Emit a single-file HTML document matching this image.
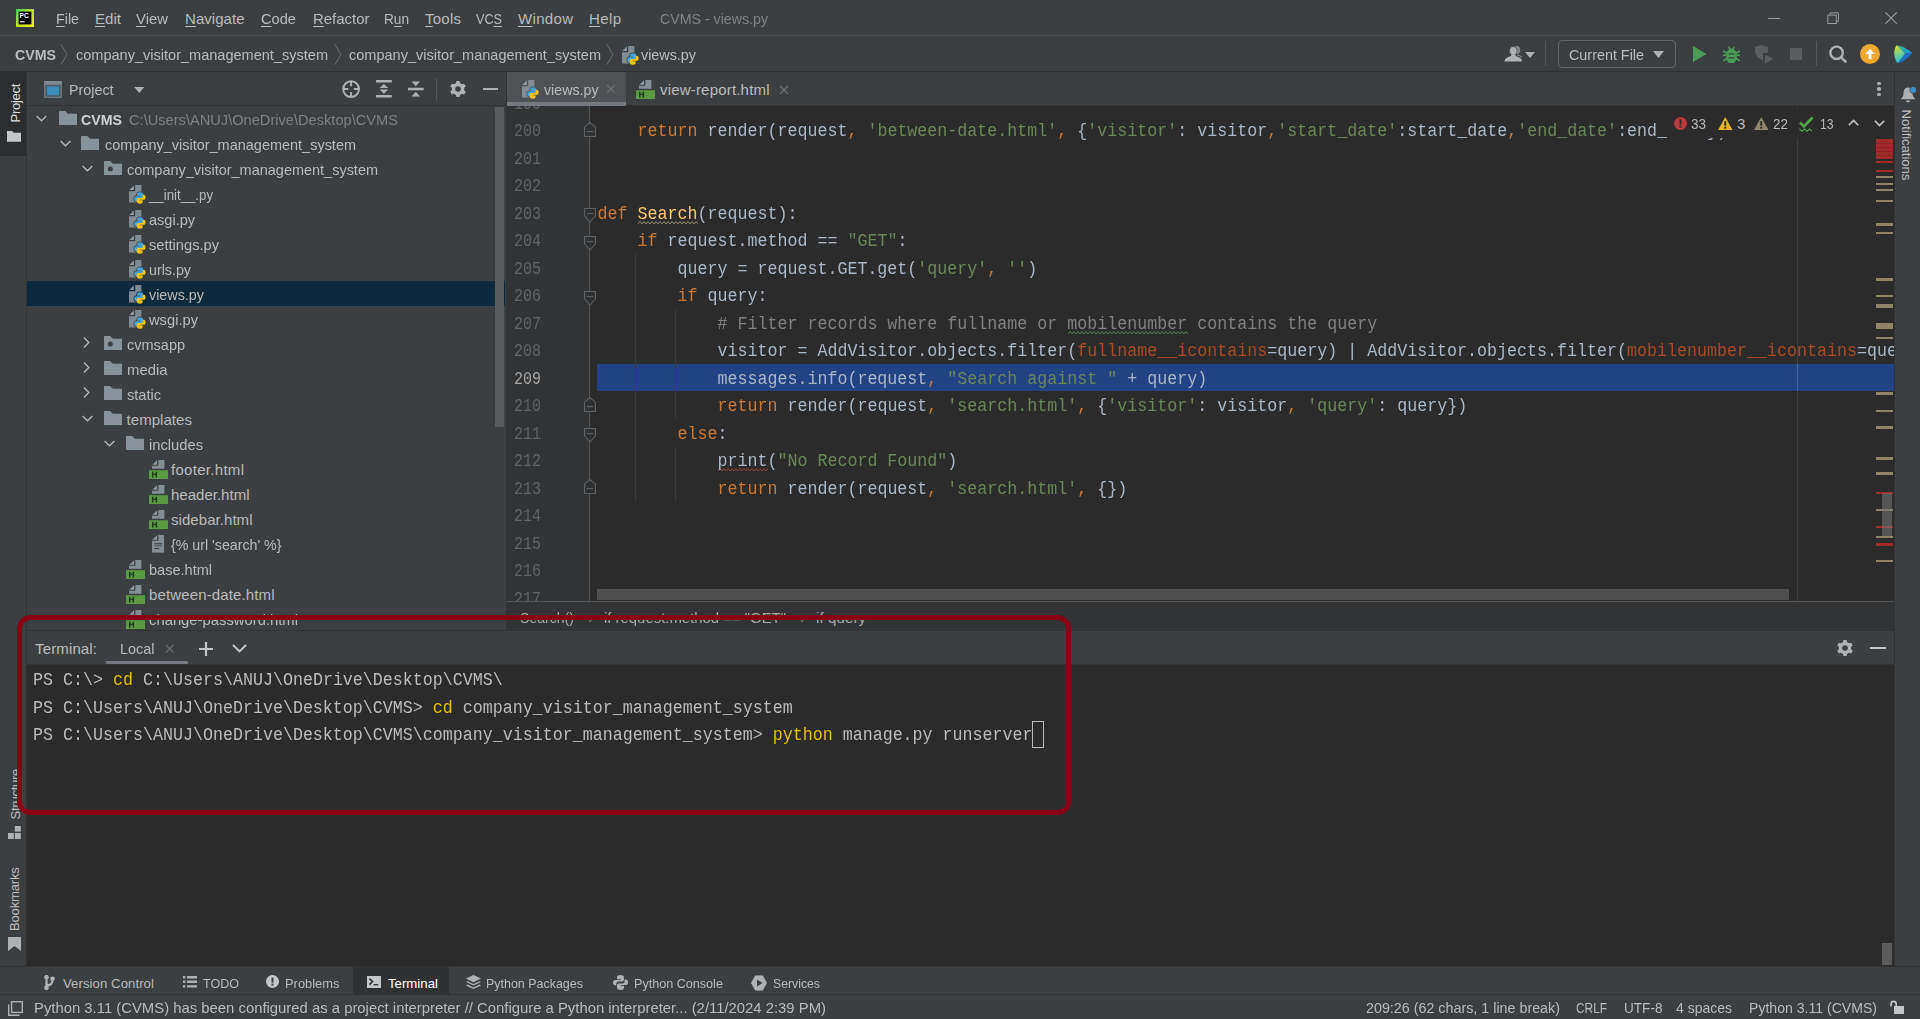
<!DOCTYPE html>
<html><head><meta charset="utf-8"><title>CVMS - views.py</title>
<style>
html,body{margin:0;padding:0;background:#3c3f41;overflow:hidden;}
body{width:1920px;height:1019px;position:relative;font-family:"Liberation Sans",sans-serif;font-size:15px;color:#bbbbbb;}
.b{position:absolute;display:block;}
.t{position:absolute;white-space:pre;display:block;}
.m{font-family:"Liberation Mono",monospace;font-size:16.667px;line-height:27.5px;white-space:pre;position:absolute;display:block;color:#a9b7c6;transform:scaleY(1.07);transform-origin:0 18.2px;}
.k{color:#cc7832}.s{color:#6a8759}.c{color:#808080}.f{color:#ffc66d}.a{color:#aa4926}.y{color:#e5bf00}
.ln{font-family:"Liberation Mono",monospace;font-size:15px;line-height:27.5px;position:absolute;left:514px;color:#606366;white-space:pre;transform:scaleY(1.17);transform-origin:0 17.75px;}
u{text-decoration:underline;text-decoration-thickness:1px;text-underline-offset:1.5px;}
</style></head><body>
<svg width="0" height="0" style="position:absolute"><defs>
<symbol id="folder" viewBox="0 0 18 14"><path d="M.6,0 H6.2 L8.9,2.75 H18 V14 H0 V.6 Q0,0 .6,0z" fill="#87939a"/></symbol>
<symbol id="pkg" viewBox="0 0 18 14"><path d="M.6,0 H6.2 L8.9,2.75 H18 V14 H0 V.6 Q0,0 .6,0z" fill="#87939a"/><circle cx="6.3" cy="8.1" r="2.5" fill="#3c3f41"/></symbol>
<path id="pyb" d="M5.9,0 C3.6,0 3.1,1 3.1,2.2 V3.6 H6 V4.2 H2 C.7,4.2 0,5.2 0,6.9 C0,8.6 .7,9.5 2,9.5 H3 V7.9 C3,6.7 3.9,5.9 5,5.9 H7.9 C8.8,5.9 9.5,5.2 9.5,4.3 V2.2 C9.5,1 8.4,0 5.9,0z"/>
<path id="pyy" d="M6.1,12 C8.4,12 8.9,11 8.9,9.8 V8.4 H6 V7.8 H10 C11.3,7.8 12,6.8 12,5.1 C12,3.4 11.3,2.5 10,2.5 H9 V4.1 C9,5.3 8.1,6.1 7,6.1 H4.1 C3.2,6.1 2.5,6.8 2.5,7.7 V9.8 C2.5,11 3.6,12 6.1,12z"/>
<mask id="pym" maskUnits="userSpaceOnUse" x="0" y="0" width="18" height="20"><rect width="18" height="20" fill="#fff"/><g transform="translate(5.2,7.3) scale(.95)" fill="#000" stroke="#000" stroke-width="1.5"><use href="#pyb"/><use href="#pyy"/></g></mask>
<symbol id="py" viewBox="0 0 17 19.2"><g mask="url(#pym)"><path d="M.4,5 L4.8,.5 V5z" fill="#9aa7b0" opacity=".9"/><path d="M6.2,0 H12.4 V17.6 H0 V6.2 H6.2z" fill="#87939a" opacity=".92"/></g>
<g transform="translate(5.2,7.3) scale(.95)"><use href="#pyb" fill="#40a2dc"/><use href="#pyy" fill="#f5c211"/></g></symbol>
<symbol id="htm" viewBox="0 0 19.3 19"><path d="M3.3,4.7 L8.1,.2 V4.7z" fill="#9aa7b0" opacity=".85"/><path d="M9.4,0 H15.4 V8.8 H3 V5.8 H9.4z" fill="#87939a" opacity=".95"/>
<rect x="0" y="10.2" width="19.3" height="8.8" fill="#5a9a40"/><path d="M3,11.7 h1.5 v2.1 h2.1 v-2.1 h1.5 v5.7 h-1.5 v-2.3 h-2.1 v2.3 h-1.5z" fill="#1d3d18"/></symbol>
<symbol id="tx" viewBox="0 0 12.4 17.8"><path d="M.3,4.8 L5.1,.3 V4.8z" fill="#9aa7b0" opacity=".85"/><path d="M6.4,0 H12.4 V17.8 H0 V5.8 H6.4z" fill="#87939a" opacity=".95"/><path d="M2.4,8.2 h7.6 v.95 h-7.6z M2.4,10.4 h7.6 v.95 h-7.6z M2.4,13 h4.8 v.95 h-4.8z" fill="#3c3f41"/></symbol>
<symbol id="chd" viewBox="0 0 11 7"><path d="M.6,.9 L5.5,5.8 L10.4,.9" fill="none" stroke="#b4b6b8" stroke-width="1.4"/></symbol>
<symbol id="chr" viewBox="0 0 7 11"><path d="M.9,.6 L5.8,5.5 L.9,10.4" fill="none" stroke="#b4b6b8" stroke-width="1.4"/></symbol>
<symbol id="gear" viewBox="0 0 16 16.2"><path fill-rule="evenodd" fill="#afb1b3" d="M5.99,2.13 L6.38,0.06 L9.62,0.06 L10.01,2.13 L12.17,3.37 L14.15,2.68 L15.77,5.48 L14.18,6.85 L14.18,9.35 L15.77,10.72 L14.15,13.52 L12.17,12.83 L10.01,14.07 L9.62,16.14 L6.38,16.14 L5.99,14.07 L3.83,12.83 L1.85,13.52 L0.23,10.72 L1.82,9.35 L1.82,6.85 L0.23,5.48 L1.85,2.68 L3.83,3.37z M5.20,8.10 a2.80,2.80 0 1 0 5.60,0 a2.80,2.80 0 1 0 -5.60,0z"/></symbol>
<symbol id="x" viewBox="0 0 10 10"><path d="M1,1 L9,9 M9,1 L1,9" stroke="#6e7073" stroke-width="1.2" fill="none"/></symbol>
</defs></svg>
<div class="b" style="left:0.00px;top:0.00px;width:1920.00px;height:1019.00px;background:#3c3f41;"></div>
<div class="b" style="left:0.00px;top:35.00px;width:1920.00px;height:1.00px;background:#515151;"></div>
<div class="b" style="left:0.00px;top:71.00px;width:1920.00px;height:1.00px;background:#323232;"></div>
<svg class="b" style="left:16.00px;top:9.00px;" width="18.00" height="18.00" viewBox="0 0 18 18"><defs><linearGradient id="lg" x1="0" y1="0" x2="1" y2="1"><stop offset="0" stop-color="#3fd35a"/><stop offset=".45" stop-color="#b6e021"/><stop offset="1" stop-color="#f5ee1c"/></linearGradient></defs><rect width="18" height="18" fill="url(#lg)"/><rect x="2.6" y="2.6" width="12.8" height="12.8" fill="#000"/><text x="3.6" y="9.4" font-family="Liberation Sans" font-weight="bold" font-size="6.6" fill="#fff">PC</text><rect x="4" y="12.2" width="4.6" height="1.1" fill="#fff"/></svg>
<span class="t" style="left:56.00px;top:8.50px;line-height:20px;font-size:15px;color:#bbbbbb;transform:scaleX(0.9515);transform-origin:0 50%;"><u>F</u>ile</span>
<span class="t" style="left:95.00px;top:8.50px;line-height:20px;font-size:15px;color:#bbbbbb;letter-spacing:0.051px;"><u>E</u>dit</span>
<span class="t" style="left:136.00px;top:8.50px;line-height:20px;font-size:15px;color:#bbbbbb;transform:scaleX(0.9925);transform-origin:0 50%;"><u>V</u>iew</span>
<span class="t" style="left:185.00px;top:8.50px;line-height:20px;font-size:15px;color:#bbbbbb;letter-spacing:0.042px;"><u>N</u>avigate</span>
<span class="t" style="left:261.00px;top:8.50px;line-height:20px;font-size:15px;color:#bbbbbb;transform:scaleX(0.9760);transform-origin:0 50%;"><u>C</u>ode</span>
<span class="t" style="left:312.50px;top:8.50px;line-height:20px;font-size:15px;color:#bbbbbb;transform:scaleX(0.9966);transform-origin:0 50%;"><u>R</u>efactor</span>
<span class="t" style="left:384.00px;top:8.50px;line-height:20px;font-size:15px;color:#bbbbbb;transform:scaleX(0.9085);transform-origin:0 50%;">R<u>u</u>n</span>
<span class="t" style="left:425.00px;top:8.50px;line-height:20px;font-size:15px;color:#bbbbbb;letter-spacing:0.246px;"><u>T</u>ools</span>
<span class="t" style="left:476.00px;top:8.50px;line-height:20px;font-size:15px;color:#bbbbbb;transform:scaleX(0.8430);transform-origin:0 50%;">VC<u>S</u></span>
<span class="t" style="left:518.00px;top:8.50px;line-height:20px;font-size:15px;color:#bbbbbb;letter-spacing:0.330px;"><u>W</u>indow</span>
<span class="t" style="left:589.00px;top:8.50px;line-height:20px;font-size:15px;color:#bbbbbb;letter-spacing:0.383px;"><u>H</u>elp</span>
<span class="t" style="left:660.00px;top:8.50px;line-height:20px;font-size:15px;color:#808284;transform:scaleX(0.9458);transform-origin:0 50%;">CVMS - views.py</span>
<div class="b" style="left:1767.80px;top:18.10px;width:12.50px;height:1.10px;background:#9c9e9f;"></div>
<svg class="b" style="left:1826.70px;top:11.70px;" width="12.40" height="12.40" viewBox="0 0 14 14"><path d="M3.5,3.5 V1 H13 V10.5 H10.5" fill="none" stroke="#9c9e9f" stroke-width="1.1"/><rect x="1" y="3.5" width="9.5" height="9.5" fill="none" stroke="#9c9e9f" stroke-width="1.1"/></svg>
<svg class="b" style="left:1884.80px;top:12.00px;" width="12.20" height="12.20" viewBox="0 0 13 13"><path d="M.5,.5 L12.5,12.5 M12.5,.5 L.5,12.5" stroke="#9c9e9f" stroke-width="1.1"/></svg>
<span class="t" style="left:15.00px;top:44.50px;line-height:20px;font-size:15px;color:#bbbbbb;font-weight:bold;transform:scaleX(0.9460);transform-origin:0 50%;">CVMS</span>
<svg class="b" style="left:60.00px;top:44.00px;" width="8.00" height="21.00" viewBox="0 0 8 21"><path d="M1,.5 L7,10.5 L1,20.5" fill="none" stroke="#6c6e70" stroke-width="1"/></svg>
<span class="t" style="left:76.00px;top:44.50px;line-height:20px;font-size:15px;color:#bbbbbb;transform:scaleX(0.9688);transform-origin:0 50%;">company_visitor_management_system</span>
<svg class="b" style="left:334.00px;top:44.00px;" width="8.00" height="21.00" viewBox="0 0 8 21"><path d="M1,.5 L7,10.5 L1,20.5" fill="none" stroke="#6c6e70" stroke-width="1"/></svg>
<span class="t" style="left:349.00px;top:44.50px;line-height:20px;font-size:15px;color:#bbbbbb;transform:scaleX(0.9688);transform-origin:0 50%;">company_visitor_management_system</span>
<svg class="b" style="left:606.00px;top:44.00px;" width="8.00" height="21.00" viewBox="0 0 8 21"><path d="M1,.5 L7,10.5 L1,20.5" fill="none" stroke="#6c6e70" stroke-width="1"/></svg>
<svg class="b" style="left:621.70px;top:45.50px;" width="17.00" height="19.20"><use href="#py"/></svg>
<span class="t" style="left:641.00px;top:44.50px;line-height:20px;font-size:15px;color:#bbbbbb;transform:scaleX(0.9562);transform-origin:0 50%;">views.py</span>
<svg class="b" style="left:1503.50px;top:45.50px;" width="19.00" height="16.00" viewBox="0 0 19 16"><ellipse cx="13" cy="4" rx="3.3" ry="3.9" fill="#85878a"/><path d="M13.5,8.2 C16,8.8 17.6,9.6 18.2,11.6 L16.6,11.2 C15.8,10.4 14.6,10 13.2,9.8z" fill="#85878a"/><ellipse cx="9.3" cy="5" rx="3.7" ry="4.4" fill="#afb1b3" stroke="#3c3f41" stroke-width=".7"/><path d="M.6,15.6 C.9,12.4 2.4,11.4 6.4,10.2 L7.4,8.8 H11.2 L12.2,10.2 C16.2,11.4 17.7,12.4 18,15.6z" fill="#afb1b3"/></svg>
<svg class="b" style="left:1525.00px;top:52.00px;" width="10.00" height="6.00" viewBox="0 0 10 6"><path d="M0,0 H10 L5,6z" fill="#afb1b3"/></svg>
<div class="b" style="left:1545.00px;top:41.00px;width:1.00px;height:25.00px;background:#55585a;"></div>
<div class="b" style="left:1558.00px;top:40.00px;width:118.00px;height:27.50px;background:transparent;box-sizing:border-box;border:1px solid #646769;border-radius:4px;"></div>
<span class="t" style="left:1569.00px;top:44.50px;line-height:20px;font-size:15px;color:#bbbbbb;transform:scaleX(0.9572);transform-origin:0 50%;">Current File</span>
<svg class="b" style="left:1653.00px;top:51.00px;" width="11.00" height="7.00" viewBox="0 0 11 7"><path d="M0,0 H11 L5.5,7z" fill="#afb1b3"/></svg>
<svg class="b" style="left:1693.00px;top:46.00px;" width="13.50" height="16.00" viewBox="0 0 13.5 16"><path d="M0,0 L13.5,8 L0,16z" fill="#499c54"/></svg>
<svg class="b" style="left:1722.50px;top:45.50px;" width="17.00" height="17.40" viewBox="0 0 17 17.4"><g fill="#499c54"><path d="M4.9,1 L6.1,.2 L7.6,2.6 H9.4 L10.9,.2 L12.1,1 L10.6,3.4 C12.6,4.2 13.7,6 13.7,8.4 V11.2 C13.7,14.8 11.6,17.4 8.5,17.4 S3.3,14.8 3.3,11.2 V8.4 C3.3,6 4.4,4.2 6.4,3.4z"/><path d="M0,8.3 H17 V10.1 H0z M.6,4.2 L4.4,6.6 L3.5,8 L-.3,5.6z M16.4,4.2 L12.6,6.6 L13.5,8 L17.3,5.6z M.6,15.6 L4.4,13.2 L3.5,11.8 L-.3,14.2z M16.4,15.6 L12.6,13.2 L13.5,11.8 L17.3,14.2z"/></g><path d="M5.6,7.3 H11.4 V8.5 H5.6z M5.6,11.3 H11.4 V12.5 H5.6z" fill="#3c3f41"/></svg>
<svg class="b" style="left:1754.00px;top:45.00px;" width="20.00" height="19.00" viewBox="0 0 20 19"><path d="M1,2 L7.5,0 L14,2 V8 H9 V15.5 C4,13.5 1,10 1,6z" fill="#5a5d5f"/><path d="M11,9.5 L19.5,14 L11,18.5z" fill="#5a5d5f"/></svg>
<div class="b" style="left:1789.50px;top:47.70px;width:12.60px;height:12.60px;background:#5a5d5f;"></div>
<div class="b" style="left:1816.00px;top:41.00px;width:1.00px;height:25.00px;background:#55585a;"></div>
<svg class="b" style="left:1828.00px;top:43.50px;" width="20.00" height="20.00" viewBox="0 0 20 20"><circle cx="8.6" cy="8.8" r="6.2" fill="none" stroke="#afb1b3" stroke-width="2.4"/><path d="M13.3,13.6 L18.3,18.3" stroke="#afb1b3" stroke-width="2.6"/></svg>
<svg class="b" style="left:1860.00px;top:43.90px;" width="20.00" height="20.00" viewBox="0 0 20 20"><circle cx="10" cy="10" r="10" fill="#f0a732"/><path d="M10,5.1 L5.1,10 H8.55 V15.1 H11.45 V10 H14.9z" fill="#fff"/></svg>
<svg class="b" style="left:1893.70px;top:44.70px;" width="18.50" height="18.60" viewBox="0 0 18.5 18.6"><defs><linearGradient id="gA" x1="0" y1="0" x2="0.25" y2="1"><stop offset="0" stop-color="#efe62f"/><stop offset=".45" stop-color="#86d37a"/><stop offset="1" stop-color="#22bfd8"/></linearGradient><linearGradient id="gB" x1="0" y1="0" x2="1" y2="1"><stop offset="0" stop-color="#3cc47a"/><stop offset=".5" stop-color="#25abc0"/><stop offset="1" stop-color="#1c8fe0"/></linearGradient></defs><path d="M2.6,.2 C8,1 14,4 18.4,8.2 L11.2,8.4z" fill="url(#gB)"/><path d="M11.2,8.4 L18.4,8.2 C14,13 9,17 3.6,18.5z" fill="#1e6fc6"/><path d="M2.6,.2 C-.6,5 -.8,12.5 3.6,18.5 L11.2,8.4z" fill="url(#gA)"/></svg>
<div class="b" style="left:0.00px;top:72.00px;width:27.00px;height:894.00px;background:#3c3f41;"></div>
<div class="b" style="left:26.00px;top:72.00px;width:1.00px;height:894.00px;background:#323232;"></div>
<div class="b" style="left:0.00px;top:72.00px;width:26.00px;height:84.00px;background:#2b2d2e;"></div>
<span class="t" style="left:-4.00px;top:92.50px;width:39.00px;height:20px;line-height:20px;font-size:13.2px;color:#dddddd;letter-spacing:-0.347px;transform:rotate(-90deg);transform-origin:center center;">Project</span>
<svg class="b" style="left:7.00px;top:130.00px;" width="14.00" height="12.00" viewBox="0 0 18 15"><path d="M0,1 h6.6 l2.2,2.4 H18 V15 H0z" fill="#c4c6c8"/></svg>
<span class="t" style="left:-10.30px;top:783.50px;width:51.00px;height:20px;line-height:20px;font-size:13.2px;color:#bbbbbb;letter-spacing:-0.319px;transform:rotate(-90deg);transform-origin:center center;">Structure</span>
<svg class="b" style="left:8.00px;top:826.00px;" width="13.00" height="13.00" viewBox="0 0 13 13"><rect x="6.8" y="0" width="6" height="5.6" fill="#afb1b3"/><rect x="0" y="7" width="5.8" height="6" fill="#afb1b3"/><rect x="6.8" y="7" width="6" height="6" fill="#afb1b3"/></svg>
<span class="t" style="left:-16.80px;top:889.00px;width:64.00px;height:20px;line-height:20px;font-size:13.2px;color:#bbbbbb;letter-spacing:-0.253px;transform:rotate(-90deg);transform-origin:center center;">Bookmarks</span>
<svg class="b" style="left:8.00px;top:937.00px;" width="13.00" height="14.00" viewBox="0 0 13 14"><path d="M0,0 H13 V14 L6.5,9 L0,14z" fill="#afb1b3"/></svg>
<div class="b" style="left:27.00px;top:72.00px;width:479.00px;height:34.00px;background:#3c3f41;"></div>
<div class="b" style="left:27.00px;top:105.00px;width:479.00px;height:1.00px;background:#323232;"></div>
<div class="b" style="left:506.00px;top:72.00px;width:1.00px;height:34.00px;background:#323232;"></div>
<svg class="b" style="left:44.00px;top:81.00px;" width="18.00" height="17.20" viewBox="0 0 18 17.2"><rect x="0" y="0" width="18" height="17.2" fill="#6b767d"/><rect x="0" y="0" width="18" height="3.4" fill="#7d8990"/><rect x="1.6" y="4.2" width="14.8" height="11.4" fill="#4b5358"/><rect x="2.8" y="5.4" width="12.4" height="9" fill="#3b8db5"/></svg>
<span class="t" style="left:69.00px;top:79.50px;line-height:20px;font-size:15px;color:#bbbbbb;transform:scaleX(0.9532);transform-origin:0 50%;">Project</span>
<svg class="b" style="left:134.00px;top:87.00px;" width="10.50" height="6.00" viewBox="0 0 10 6"><path d="M0,0 H10 L5,6z" fill="#afb1b3"/></svg>
<svg class="b" style="left:342.00px;top:79.80px;" width="18.20" height="18.20" viewBox="0 0 18.2 18.2"><circle cx="9.1" cy="9.1" r="7.9" fill="none" stroke="#afb1b3" stroke-width="2"/><path d="M9.1,1.2 V6.3 M9.1,11.9 V17 M1.2,9.1 H6.3 M11.9,9.1 H17" stroke="#afb1b3" stroke-width="2"/></svg>
<svg class="b" style="left:376.20px;top:80.20px;" width="15.80" height="17.60" viewBox="0 0 15.8 17.6"><path d="M0,0 H15.8 V2.5 H0z M0,15.1 H15.8 V17.6 H0z M7.9,3.9 L12.2,8 H3.6z M7.9,13.7 L12.2,9.6 H3.6z" fill="#afb1b3"/></svg>
<svg class="b" style="left:408.20px;top:81.00px;" width="15.60" height="16.00" viewBox="0 0 15.6 16"><path d="M0,6.7 H15.6 V9.2 H0z M7.8,5.2 L12,.4 H3.6z M7.8,10.8 L12,15.6 H3.6z" fill="#afb1b3"/></svg>
<div class="b" style="left:436.00px;top:78.00px;width:1.00px;height:23.00px;background:#55585a;"></div>
<svg class="b" style="left:450.00px;top:80.90px;" width="16.00" height="16.20"><use href="#gear"/></svg>
<div class="b" style="left:482.50px;top:87.80px;width:15.20px;height:2.40px;background:#afb1b3;"></div>
<div class="b" style="left:27.00px;top:281.00px;width:478.00px;height:25.00px;background:#0d293e;"></div>
<div class="b" style="left:495.00px;top:107.00px;width:9.00px;height:320.00px;background:#595b5d;"></div>
<svg class="b" style="left:36.00px;top:114.70px;" width="11.00" height="7.00"><use href="#chd"/></svg>
<svg class="b" style="left:59.00px;top:111.20px;" width="18.00" height="14.00"><use href="#folder"/></svg>
<span class="t" style="left:81.00px;top:109.80px;line-height:20px;font-size:15px;color:#d0d0d0;font-weight:bold;transform:scaleX(0.9460);transform-origin:0 50%;">CVMS</span>
<svg class="b" style="left:59.50px;top:139.70px;" width="11.00" height="7.00"><use href="#chd"/></svg>
<svg class="b" style="left:81.00px;top:136.20px;" width="18.00" height="14.00"><use href="#folder"/></svg>
<span class="t" style="left:104.50px;top:134.80px;line-height:20px;font-size:15px;color:#bbbbbb;transform:scaleX(0.9649);transform-origin:0 50%;">company_visitor_management_system</span>
<svg class="b" style="left:81.50px;top:164.70px;" width="11.00" height="7.00"><use href="#chd"/></svg>
<svg class="b" style="left:104.00px;top:161.20px;" width="18.00" height="14.00"><use href="#pkg"/></svg>
<span class="t" style="left:126.50px;top:159.80px;line-height:20px;font-size:15px;color:#bbbbbb;transform:scaleX(0.9649);transform-origin:0 50%;">company_visitor_management_system</span>
<svg class="b" style="left:128.90px;top:185.00px;" width="17.00" height="19.20"><use href="#py"/></svg>
<span class="t" style="left:149.00px;top:184.80px;line-height:20px;font-size:15px;color:#bbbbbb;transform:scaleX(0.8821);transform-origin:0 50%;">__init__.py</span>
<svg class="b" style="left:128.90px;top:210.00px;" width="17.00" height="19.20"><use href="#py"/></svg>
<span class="t" style="left:149.00px;top:209.80px;line-height:20px;font-size:15px;color:#bbbbbb;transform:scaleX(0.9679);transform-origin:0 50%;">asgi.py</span>
<svg class="b" style="left:128.90px;top:235.00px;" width="17.00" height="19.20"><use href="#py"/></svg>
<span class="t" style="left:149.00px;top:234.80px;line-height:20px;font-size:15px;color:#bbbbbb;transform:scaleX(0.9762);transform-origin:0 50%;">settings.py</span>
<svg class="b" style="left:128.90px;top:260.00px;" width="17.00" height="19.20"><use href="#py"/></svg>
<span class="t" style="left:149.00px;top:259.80px;line-height:20px;font-size:15px;color:#bbbbbb;transform:scaleX(0.9506);transform-origin:0 50%;">urls.py</span>
<svg class="b" style="left:128.90px;top:285.00px;" width="17.00" height="19.20"><use href="#py"/></svg>
<span class="t" style="left:149.00px;top:284.80px;line-height:20px;font-size:15px;color:#bbbbbb;transform:scaleX(0.9562);transform-origin:0 50%;">views.py</span>
<svg class="b" style="left:128.90px;top:310.00px;" width="17.00" height="19.20"><use href="#py"/></svg>
<span class="t" style="left:149.00px;top:309.80px;line-height:20px;font-size:15px;color:#bbbbbb;transform:scaleX(0.9796);transform-origin:0 50%;">wsgi.py</span>
<svg class="b" style="left:82.50px;top:337.40px;" width="7.00" height="11.00"><use href="#chr"/></svg>
<svg class="b" style="left:104.00px;top:336.20px;" width="18.00" height="14.00"><use href="#pkg"/></svg>
<span class="t" style="left:126.50px;top:334.80px;line-height:20px;font-size:15px;color:#bbbbbb;transform:scaleX(0.9663);transform-origin:0 50%;">cvmsapp</span>
<svg class="b" style="left:82.50px;top:362.40px;" width="7.00" height="11.00"><use href="#chr"/></svg>
<svg class="b" style="left:104.00px;top:361.20px;" width="18.00" height="14.00"><use href="#folder"/></svg>
<span class="t" style="left:126.50px;top:359.80px;line-height:20px;font-size:15px;color:#bbbbbb;transform:scaleX(0.9913);transform-origin:0 50%;">media</span>
<svg class="b" style="left:82.50px;top:387.40px;" width="7.00" height="11.00"><use href="#chr"/></svg>
<svg class="b" style="left:104.00px;top:386.20px;" width="18.00" height="14.00"><use href="#folder"/></svg>
<span class="t" style="left:126.50px;top:384.80px;line-height:20px;font-size:15px;color:#bbbbbb;transform:scaleX(0.9712);transform-origin:0 50%;">static</span>
<svg class="b" style="left:81.50px;top:414.70px;" width="11.00" height="7.00"><use href="#chd"/></svg>
<svg class="b" style="left:104.00px;top:411.20px;" width="18.00" height="14.00"><use href="#folder"/></svg>
<span class="t" style="left:126.50px;top:409.80px;line-height:20px;font-size:15px;color:#bbbbbb;letter-spacing:0.058px;">templates</span>
<svg class="b" style="left:103.50px;top:439.70px;" width="11.00" height="7.00"><use href="#chd"/></svg>
<svg class="b" style="left:126.00px;top:436.20px;" width="18.00" height="14.00"><use href="#folder"/></svg>
<span class="t" style="left:149.00px;top:434.80px;line-height:20px;font-size:15px;color:#bbbbbb;transform:scaleX(0.9812);transform-origin:0 50%;">includes</span>
<svg class="b" style="left:148.90px;top:460.00px;" width="19.30" height="19.00"><use href="#htm"/></svg>
<span class="t" style="left:171.00px;top:459.80px;line-height:20px;font-size:15px;color:#bbbbbb;letter-spacing:0.296px;">footer.html</span>
<svg class="b" style="left:148.90px;top:485.00px;" width="19.30" height="19.00"><use href="#htm"/></svg>
<span class="t" style="left:171.00px;top:484.80px;line-height:20px;font-size:15px;color:#bbbbbb;letter-spacing:0.011px;">header.html</span>
<svg class="b" style="left:148.90px;top:510.00px;" width="19.30" height="19.00"><use href="#htm"/></svg>
<span class="t" style="left:171.00px;top:509.80px;line-height:20px;font-size:15px;color:#bbbbbb;letter-spacing:0.057px;">sidebar.html</span>
<svg class="b" style="left:151.90px;top:535.00px;" width="12.40" height="17.80"><use href="#tx"/></svg>
<span class="t" style="left:171.00px;top:534.80px;line-height:20px;font-size:15px;color:#bbbbbb;transform:scaleX(0.9475);transform-origin:0 50%;">{% url 'search' %}</span>
<svg class="b" style="left:126.00px;top:560.00px;" width="19.30" height="19.00"><use href="#htm"/></svg>
<span class="t" style="left:149.00px;top:559.80px;line-height:20px;font-size:15px;color:#bbbbbb;transform:scaleX(0.9687);transform-origin:0 50%;">base.html</span>
<svg class="b" style="left:126.00px;top:585.00px;" width="19.30" height="19.00"><use href="#htm"/></svg>
<span class="t" style="left:149.00px;top:584.80px;line-height:20px;font-size:15px;color:#bbbbbb;letter-spacing:0.131px;">between-date.html</span>
<svg class="b" style="left:126.00px;top:610.00px;" width="19.30" height="19.00"><use href="#htm"/></svg>
<span class="t" style="left:149.00px;top:609.80px;line-height:20px;font-size:15px;color:#bbbbbb;transform:scaleX(0.9873);transform-origin:0 50%;">change-password.html</span>
<span class="t" style="left:129.00px;top:109.80px;line-height:20px;font-size:15px;color:#7d8082;transform:scaleX(0.9750);transform-origin:0 50%;">C:\Users\ANUJ\OneDrive\Desktop\CVMS</span>
<div class="b" style="left:507.00px;top:72.00px;width:1387.00px;height:34.00px;background:#3c3f41;"></div>
<div class="b" style="left:507.00px;top:105.00px;width:1387.00px;height:1.00px;background:#323232;"></div>
<div class="b" style="left:507.00px;top:72.00px;width:119.00px;height:33.00px;background:#4e5254;"></div>
<div class="b" style="left:507.00px;top:102.00px;width:119.00px;height:4.00px;background:#747a80;"></div>
<svg class="b" style="left:521.70px;top:80.00px;" width="17.00" height="19.20"><use href="#py"/></svg>
<span class="t" style="left:543.50px;top:79.50px;line-height:20px;font-size:15px;color:#bbbbbb;transform:scaleX(0.9475);transform-origin:0 50%;">views.py</span>
<svg class="b" style="left:606.00px;top:84.00px;" width="10.00" height="10.00"><use href="#x"/></svg>
<svg class="b" style="left:636.00px;top:80.00px;" width="19.30" height="19.00"><use href="#htm"/></svg>
<span class="t" style="left:660.00px;top:79.50px;line-height:20px;font-size:15px;color:#bbbbbb;letter-spacing:0.187px;">view-report.html</span>
<svg class="b" style="left:779.00px;top:84.50px;" width="10.00" height="10.00"><use href="#x"/></svg>
<div class="b" style="left:1877.20px;top:81.50px;width:3.60px;height:3.60px;background:#afb1b3;border-radius:50%;"></div>
<div class="b" style="left:1877.20px;top:87.15px;width:3.60px;height:3.60px;background:#afb1b3;border-radius:50%;"></div>
<div class="b" style="left:1877.20px;top:92.80px;width:3.60px;height:3.60px;background:#afb1b3;border-radius:50%;"></div>
<div class="b" style="left:507.00px;top:106.00px;width:1387.00px;height:495.00px;background:#2b2b2b;"></div>
<div class="b" style="left:506.00px;top:106.00px;width:84.00px;height:495.00px;background:#313335;"></div>
<div class="b" style="left:589.00px;top:106.00px;width:1.00px;height:495.00px;background:#555555;"></div>
<div class="b" style="left:507px;top:106px;width:1387px;height:495px;overflow:hidden;">
<div class="b" style="left:90.00px;top:258.00px;width:1297.00px;height:27.00px;background:#214283;"></div>
<div class="b" style="left:128.00px;top:148.00px;width:1.00px;height:247.50px;background:#3a3b3c;"></div>
<div class="b" style="left:168.00px;top:203.00px;width:1.00px;height:110.00px;background:#3a3b3c;"></div>
<div class="b" style="left:168.00px;top:340.50px;width:1.00px;height:55.00px;background:#3a3b3c;"></div>
<div class="b" style="left:1290.00px;top:0.00px;width:1.00px;height:495.00px;background:#3d3d3d;"></div>
<div class="b" style="left:1290.00px;top:258.00px;width:1.00px;height:27.00px;background:#4a6398;"></div>
<span class="ln" style="left:7.1px;top:-14.40px;color:#606366">199</span>
<span class="ln" style="left:7.1px;top:13.10px;color:#606366">200</span>
<span class="ln" style="left:7.1px;top:40.60px;color:#606366">201</span>
<span class="ln" style="left:7.1px;top:68.10px;color:#606366">202</span>
<span class="ln" style="left:7.1px;top:95.60px;color:#606366">203</span>
<span class="ln" style="left:7.1px;top:123.10px;color:#606366">204</span>
<span class="ln" style="left:7.1px;top:150.60px;color:#606366">205</span>
<span class="ln" style="left:7.1px;top:178.10px;color:#606366">206</span>
<span class="ln" style="left:7.1px;top:205.60px;color:#606366">207</span>
<span class="ln" style="left:7.1px;top:233.10px;color:#606366">208</span>
<span class="ln" style="left:7.1px;top:260.60px;color:#a4a3a3">209</span>
<span class="ln" style="left:7.1px;top:288.10px;color:#606366">210</span>
<span class="ln" style="left:7.1px;top:315.60px;color:#606366">211</span>
<span class="ln" style="left:7.1px;top:343.10px;color:#606366">212</span>
<span class="ln" style="left:7.1px;top:370.60px;color:#606366">213</span>
<span class="ln" style="left:7.1px;top:398.10px;color:#606366">214</span>
<span class="ln" style="left:7.1px;top:425.60px;color:#606366">215</span>
<span class="ln" style="left:7.1px;top:453.10px;color:#606366">216</span>
<span class="ln" style="left:7.1px;top:480.60px;color:#606366">217</span>
<svg class="b" style="left:130.50px;top:114.60px;" width="60.00" height="3.50" viewBox="0 0 60.0 3.5"><polyline points="0.0,2.9 2.0,0.6 4.0,2.9 6.0,0.6 8.0,2.9 10.0,0.6 12.0,2.9 14.0,0.6 16.0,2.9 18.0,0.6 20.0,2.9 22.0,0.6 24.0,2.9 26.0,0.6 28.0,2.9 30.0,0.6 32.0,2.9 34.0,0.6 36.0,2.9 38.0,0.6 40.0,2.9 42.0,0.6 44.0,2.9 46.0,0.6 48.0,2.9 50.0,0.6 52.0,2.9 54.0,0.6 56.0,2.9 58.0,0.6 60.0,2.9" fill="none" stroke="#a8a283" stroke-width="0.9"/></svg>
<svg class="b" style="left:560.50px;top:224.60px;" width="120.00" height="3.50" viewBox="0 0 120.0 3.5"><polyline points="0.0,2.9 2.0,0.6 4.0,2.9 6.0,0.6 8.0,2.9 10.0,0.6 12.0,2.9 14.0,0.6 16.0,2.9 18.0,0.6 20.0,2.9 22.0,0.6 24.0,2.9 26.0,0.6 28.0,2.9 30.0,0.6 32.0,2.9 34.0,0.6 36.0,2.9 38.0,0.6 40.0,2.9 42.0,0.6 44.0,2.9 46.0,0.6 48.0,2.9 50.0,0.6 52.0,2.9 54.0,0.6 56.0,2.9 58.0,0.6 60.0,2.9 62.0,0.6 64.0,2.9 66.0,0.6 68.0,2.9 70.0,0.6 72.0,2.9 74.0,0.6 76.0,2.9 78.0,0.6 80.0,2.9 82.0,0.6 84.0,2.9 86.0,0.6 88.0,2.9 90.0,0.6 92.0,2.9 94.0,0.6 96.0,2.9 98.0,0.6 100.0,2.9 102.0,0.6 104.0,2.9 106.0,0.6 108.0,2.9 110.0,0.6 112.0,2.9 114.0,0.6 116.0,2.9 118.0,0.6 120.0,2.9" fill="none" stroke="#5f8f5a" stroke-width="0.9"/></svg>
<svg class="b" style="left:210.50px;top:362.10px;" width="50.00" height="3.50" viewBox="0 0 50.0 3.5"><polyline points="0.0,2.9 2.0,0.6 4.0,2.9 6.0,0.6 8.0,2.9 10.0,0.6 12.0,2.9 14.0,0.6 16.0,2.9 18.0,0.6 20.0,2.9 22.0,0.6 24.0,2.9 26.0,0.6 28.0,2.9 30.0,0.6 32.0,2.9 34.0,0.6 36.0,2.9 38.0,0.6 40.0,2.9 42.0,0.6 44.0,2.9 46.0,0.6 48.0,2.9 50.0,0.6" fill="none" stroke="#a8503f" stroke-width="0.9"/></svg>
<span class="m" style="left:90.5px;top:12.20px;">    <span class="k">return </span>render(request<span class="k">, </span><span class="s">'between-date.html'</span><span class="k">, </span>{<span class="s">'visitor'</span>: visitor<span class="k">,</span><span class="s">'start_date'</span>:start_date<span class="k">,</span><span class="s">'end_date'</span>:end_date})</span>
<span class="m" style="left:90.5px;top:94.70px;"><span class="k">def </span><span class="f">Search</span>(request):</span>
<span class="m" style="left:90.5px;top:122.20px;">    <span class="k">if </span>request.method == <span class="s">"GET"</span>:</span>
<span class="m" style="left:90.5px;top:149.70px;">        query = request.GET.get(<span class="s">'query'</span><span class="k">, </span><span class="s">''</span>)</span>
<span class="m" style="left:90.5px;top:177.20px;">        <span class="k">if </span>query:</span>
<span class="m" style="left:90.5px;top:204.70px;">            <span class="c"># Filter records where fullname or </span><span class="c">mobilenumber</span><span class="c"> contains the query</span></span>
<span class="m" style="left:90.5px;top:232.20px;">            visitor = AddVisitor.objects.filter(<span class="a">fullname__icontains</span>=query) | AddVisitor.objects.filter(<span class="a">mobilenumber__icontains</span>=query)</span>
<span class="m" style="left:90.5px;top:259.70px;">            messages.info(request<span class="k">, </span><span class="s">"Search against "</span> + query)</span>
<span class="m" style="left:90.5px;top:287.20px;">            <span class="k">return </span>render(request<span class="k">, </span><span class="s">'search.html'</span><span class="k">, </span>{<span class="s">'visitor'</span>: visitor<span class="k">, </span><span class="s">'query'</span>: query})</span>
<span class="m" style="left:90.5px;top:314.70px;">        <span class="k">else</span>:</span>
<span class="m" style="left:90.5px;top:342.20px;">            print(<span class="s">"No Record Found"</span>)</span>
<span class="m" style="left:90.5px;top:369.70px;">            <span class="k">return </span>render(request<span class="k">, </span><span class="s">'search.html'</span><span class="k">, </span>{})</span>
<svg class="b" style="left:77.40px;top:15.80px;" width="12.00" height="15.00" viewBox="0 0 12 15"><path d="M.55,14.45 H11.45 V5.2 L6,.6 L.55,5.2z" fill="#2e3032" stroke="#5e6062" stroke-width="1.1"/><path d="M2.6,9.6 H9.4" stroke="#5e6062" stroke-width="1.1"/></svg>
<svg class="b" style="left:77.40px;top:102.00px;" width="12.00" height="15.00" viewBox="0 0 12 15"><path d="M.55,.55 H11.45 V7.8 L6,14 L.55,7.8z" fill="#2e3032" stroke="#5e6062" stroke-width="1.1"/><path d="M2.6,5.6 H9.4" stroke="#5e6062" stroke-width="1.1"/></svg>
<svg class="b" style="left:77.40px;top:129.50px;" width="12.00" height="15.00" viewBox="0 0 12 15"><path d="M.55,.55 H11.45 V7.8 L6,14 L.55,7.8z" fill="#2e3032" stroke="#5e6062" stroke-width="1.1"/><path d="M2.6,5.6 H9.4" stroke="#5e6062" stroke-width="1.1"/></svg>
<svg class="b" style="left:77.40px;top:184.50px;" width="12.00" height="15.00" viewBox="0 0 12 15"><path d="M.55,.55 H11.45 V7.8 L6,14 L.55,7.8z" fill="#2e3032" stroke="#5e6062" stroke-width="1.1"/><path d="M2.6,5.6 H9.4" stroke="#5e6062" stroke-width="1.1"/></svg>
<svg class="b" style="left:77.40px;top:290.80px;" width="12.00" height="15.00" viewBox="0 0 12 15"><path d="M.55,14.45 H11.45 V5.2 L6,.6 L.55,5.2z" fill="#2e3032" stroke="#5e6062" stroke-width="1.1"/><path d="M2.6,9.6 H9.4" stroke="#5e6062" stroke-width="1.1"/></svg>
<svg class="b" style="left:77.40px;top:322.00px;" width="12.00" height="15.00" viewBox="0 0 12 15"><path d="M.55,.55 H11.45 V7.8 L6,14 L.55,7.8z" fill="#2e3032" stroke="#5e6062" stroke-width="1.1"/><path d="M2.6,5.6 H9.4" stroke="#5e6062" stroke-width="1.1"/></svg>
<svg class="b" style="left:77.40px;top:373.30px;" width="12.00" height="15.00" viewBox="0 0 12 15"><path d="M.55,14.45 H11.45 V5.2 L6,.6 L.55,5.2z" fill="#2e3032" stroke="#5e6062" stroke-width="1.1"/><path d="M2.6,9.6 H9.4" stroke="#5e6062" stroke-width="1.1"/></svg>
<div class="b" style="left:90.00px;top:482.50px;width:1192.00px;height:11.00px;background:#4f4f4f;"></div>
<div class="b" style="left:1160.00px;top:2.00px;width:227.00px;height:29.60px;background:#2b2b2b;"></div>
<svg class="b" style="left:1166.50px;top:11.00px;" width="13.00" height="13.00" viewBox="0 0 13 13"><circle cx="6.5" cy="6.5" r="6.5" fill="#bc3a3a"/><rect x="5.5" y="2.6" width="2" height="5" fill="#2b2b2b"/><rect x="5.5" y="8.6" width="2" height="2" fill="#2b2b2b"/></svg>
<svg class="b" style="left:1211.00px;top:11.00px;" width="14.50" height="13.00" viewBox="0 0 14.5 13"><path d="M7.25,0 L14.5,13 H0z" fill="#e5b22a"/><rect x="6.3" y="4.2" width="1.9" height="4.6" fill="#2b2b2b"/><rect x="6.3" y="9.7" width="1.9" height="1.9" fill="#2b2b2b"/></svg>
<svg class="b" style="left:1246.50px;top:11.00px;" width="14.50" height="13.00" viewBox="0 0 14.5 13"><path d="M7.25,0 L14.5,13 H0z" fill="#8f876f"/><rect x="6.3" y="4.2" width="1.9" height="4.6" fill="#2b2b2b"/><rect x="6.3" y="9.7" width="1.9" height="1.9" fill="#2b2b2b"/></svg>
<svg class="b" style="left:1291.50px;top:10.00px;" width="15.00" height="16.00" viewBox="0 0 15 16"><path d="M1,6.5 L5,10.5 L13.5,1.5" fill="none" stroke="#4fa84a" stroke-width="2.6"/><path d="M.5,13 L3,15.2 L5.5,13 L8,15.2 L10.5,13 L13,15.2" fill="none" stroke="#4fa84a" stroke-width="1.1"/></svg>
</div>
<span class="t" style="left:1691.00px;top:114.00px;line-height:20px;font-size:15px;color:#bbbbbb;transform:scaleX(0.8990);transform-origin:0 50%;">33</span>
<span class="t" style="left:1737.00px;top:114.00px;line-height:20px;font-size:15px;color:#bbbbbb;">3</span>
<span class="t" style="left:1773.00px;top:114.00px;line-height:20px;font-size:15px;color:#bbbbbb;transform:scaleX(0.8990);transform-origin:0 50%;">22</span>
<span class="t" style="left:1819.50px;top:114.00px;line-height:20px;font-size:15px;color:#bbbbbb;transform:scaleX(0.8091);transform-origin:0 50%;">13</span>
<svg class="b" style="left:1848.00px;top:119.00px;" width="11.00" height="7.00" viewBox="0 0 11 7"><path d="M.8,6.2 L5.5,1.4 L10.2,6.2" fill="none" stroke="#c4c6c8" stroke-width="1.6"/></svg>
<svg class="b" style="left:1873.50px;top:120.00px;" width="11.00" height="7.00" viewBox="0 0 11 7"><path d="M.8,.8 L5.5,5.6 L10.2,.8" fill="none" stroke="#c4c6c8" stroke-width="1.6"/></svg>
<div class="b" style="left:1876.00px;top:139.00px;width:17.20px;height:20.00px;background:#9e2b29;"></div>
<div class="b" style="left:1876.00px;top:143.00px;width:17.20px;height:1.00px;background:#8c2424;"></div>
<div class="b" style="left:1876.00px;top:147.00px;width:17.20px;height:1.00px;background:#8c2424;"></div>
<div class="b" style="left:1876.00px;top:151.00px;width:17.20px;height:1.00px;background:#8c2424;"></div>
<div class="b" style="left:1876.00px;top:155.00px;width:17.20px;height:1.00px;background:#8c2424;"></div>
<div class="b" style="left:1876.00px;top:160.50px;width:17.20px;height:2.60px;background:#a12a28;"></div>
<div class="b" style="left:1876.00px;top:169.50px;width:17.20px;height:2.60px;background:#a12a28;"></div>
<div class="b" style="left:1876.00px;top:175.50px;width:17.20px;height:2.60px;background:#8f8468;"></div>
<div class="b" style="left:1876.00px;top:182.50px;width:17.20px;height:2.60px;background:#8f8468;"></div>
<div class="b" style="left:1876.00px;top:188.50px;width:17.20px;height:2.60px;background:#8f8468;"></div>
<div class="b" style="left:1876.00px;top:199.50px;width:17.20px;height:2.60px;background:#8f8468;"></div>
<div class="b" style="left:1876.00px;top:223.00px;width:17.20px;height:2.60px;background:#8f8468;"></div>
<div class="b" style="left:1876.00px;top:231.50px;width:17.20px;height:2.60px;background:#8f8468;"></div>
<div class="b" style="left:1876.00px;top:278.00px;width:17.20px;height:2.60px;background:#8f8468;"></div>
<div class="b" style="left:1876.00px;top:294.50px;width:17.20px;height:2.60px;background:#8f8468;"></div>
<div class="b" style="left:1876.00px;top:304.00px;width:17.20px;height:2.60px;background:#8f8468;"></div>
<div class="b" style="left:1876.00px;top:305.50px;width:17.20px;height:2.60px;background:#8f8468;"></div>
<div class="b" style="left:1876.00px;top:323.00px;width:17.20px;height:2.60px;background:#8f8468;"></div>
<div class="b" style="left:1876.00px;top:326.00px;width:17.20px;height:2.60px;background:#8f8468;"></div>
<div class="b" style="left:1876.00px;top:336.50px;width:17.20px;height:2.60px;background:#8f8468;"></div>
<div class="b" style="left:1876.00px;top:392.00px;width:17.20px;height:2.60px;background:#8f8468;"></div>
<div class="b" style="left:1876.00px;top:409.50px;width:17.20px;height:2.60px;background:#8f8468;"></div>
<div class="b" style="left:1876.00px;top:426.00px;width:17.20px;height:2.60px;background:#8f8468;"></div>
<div class="b" style="left:1876.00px;top:457.00px;width:17.20px;height:2.60px;background:#8f8468;"></div>
<div class="b" style="left:1876.00px;top:472.00px;width:17.20px;height:2.60px;background:#8f8468;"></div>
<div class="b" style="left:1876.00px;top:508.50px;width:17.20px;height:2.60px;background:#8f8468;"></div>
<div class="b" style="left:1876.00px;top:535.50px;width:17.20px;height:2.60px;background:#8f8468;"></div>
<div class="b" style="left:1876.00px;top:559.50px;width:17.20px;height:2.60px;background:#8f8468;"></div>
<div class="b" style="left:1876.00px;top:491.50px;width:17.20px;height:2.60px;background:#a12a28;"></div>
<div class="b" style="left:1876.00px;top:525.50px;width:17.20px;height:2.60px;background:#a12a28;"></div>
<div class="b" style="left:1876.00px;top:543.00px;width:17.20px;height:2.60px;background:#a12a28;"></div>
<div class="b" style="left:1882.00px;top:493.00px;width:10.00px;height:43.00px;background:rgba(120,120,120,.55);"></div>
<div class="b" style="left:506.00px;top:601.00px;width:1388.00px;height:30.00px;background:#313335;"></div>
<div class="b" style="left:507.00px;top:600.50px;width:1387.00px;height:1.00px;background:#555555;"></div>
<span class="t" style="left:520.00px;top:608.00px;line-height:20px;font-size:15px;color:#a9a9a9;transform:scaleX(0.9388);transform-origin:0 50%;">Search()</span>
<span class="t" style="left:588.00px;top:608.00px;line-height:20px;font-size:15px;color:#808080;">›</span>
<span class="t" style="left:604.00px;top:608.00px;line-height:20px;font-size:15px;color:#a9a9a9;transform:scaleX(0.9932);transform-origin:0 50%;">if request.method == "GET"</span>
<span class="t" style="left:800.00px;top:608.00px;line-height:20px;font-size:15px;color:#808080;">›</span>
<span class="t" style="left:816.00px;top:608.00px;line-height:20px;font-size:15px;color:#a9a9a9;letter-spacing:0.116px;">if query</span>
<div class="b" style="left:27.00px;top:631.00px;width:1867.00px;height:34.00px;background:#3c3f41;"></div>
<div class="b" style="left:27.00px;top:629.70px;width:1867.00px;height:1.00px;background:#323232;"></div>
<div class="b" style="left:27.00px;top:664.00px;width:1867.00px;height:1.00px;background:#323232;"></div>
<div class="b" style="left:27.00px;top:664.50px;width:1867.00px;height:301.50px;background:#2b2b2b;"></div>
<span class="t" style="left:35.00px;top:639.00px;line-height:20px;font-size:15px;color:#bbbbbb;letter-spacing:0.144px;">Terminal:</span>
<span class="t" style="left:120.00px;top:639.00px;line-height:20px;font-size:15px;color:#bbbbbb;transform:scaleX(0.9621);transform-origin:0 50%;">Local</span>
<svg class="b" style="left:165.00px;top:644.00px;" width="9.50" height="9.50"><use href="#x"/></svg>
<div class="b" style="left:106.00px;top:660.50px;width:82.00px;height:3.50px;background:#747a80;border-radius:1px;"></div>
<svg class="b" style="left:199.00px;top:642.00px;" width="14.00" height="14.00" viewBox="0 0 14 14"><path d="M7,0 V14 M0,7 H14" stroke="#c4c6c8" stroke-width="2.2"/></svg>
<svg class="b" style="left:231.50px;top:644.00px;" width="15.00" height="9.00" viewBox="0 0 15 9"><path d="M1,1 L7.5,7.4 L14,1" fill="none" stroke="#c4c6c8" stroke-width="2"/></svg>
<svg class="b" style="left:1837.00px;top:640.00px;" width="16.00" height="16.20"><use href="#gear"/></svg>
<div class="b" style="left:1870.20px;top:646.70px;width:15.60px;height:2.50px;background:#c4c6c8;"></div>
<span class="m" style="left:33px;top:667.00px;color:#bbbbbb;">PS C:\&gt; <span class="y">cd</span> C:\Users\ANUJ\OneDrive\Desktop\CVMS\</span>
<span class="m" style="left:33px;top:694.50px;color:#bbbbbb;">PS C:\Users\ANUJ\OneDrive\Desktop\CVMS&gt; <span class="y">cd</span> company_visitor_management_system</span>
<span class="m" style="left:33px;top:722.00px;color:#bbbbbb;">PS C:\Users\ANUJ\OneDrive\Desktop\CVMS\company_visitor_management_system&gt; <span class="y">python</span> manage.py runserver</span>
<div class="b" style="left:1032.00px;top:720.70px;width:11.50px;height:27.00px;background:transparent;box-sizing:border-box;border:1px solid #bbbbbb;"></div>
<div class="b" style="left:1882.00px;top:943.00px;width:10.00px;height:22.00px;background:#595b5d;"></div>
<div class="b" style="left:0.00px;top:966.00px;width:1920.00px;height:29.00px;background:#3c3f41;"></div>
<div class="b" style="left:0.00px;top:965.50px;width:1920.00px;height:1.00px;background:#323232;"></div>
<div class="b" style="left:0.00px;top:994.00px;width:1920.00px;height:1.00px;background:#323232;"></div>
<div class="b" style="left:353.00px;top:966.00px;width:96.00px;height:28.00px;background:#2f3133;"></div>
<svg class="b" style="left:43.50px;top:975.00px;" width="11.00" height="15.00" viewBox="0 0 11 15"><path d="M2.5,1 V14 M2.5,10.5 C7.5,10.5 8.5,8 8.5,4.5" fill="none" stroke="#afb1b3" stroke-width="2.3"/><circle cx="2.5" cy="2.2" r="2.3" fill="#afb1b3"/><circle cx="8.5" cy="3.7" r="2.3" fill="#afb1b3"/><circle cx="2.5" cy="12.8" r="2.3" fill="#afb1b3"/></svg>
<span class="t" style="left:63.00px;top:973.50px;line-height:20px;font-size:13.2px;color:#bbbbbb;letter-spacing:0.054px;">Version Control</span>
<svg class="b" style="left:183.00px;top:976.00px;" width="14.00" height="12.00" viewBox="0 0 14 12"><path d="M0,0 h2.4 v2.4 h-2.4z M4,0 h10 v2.4 h-10z M0,4.6 h2.4 v2.4 h-2.4z M4,4.6 h10 v2.4 h-10z M0,9.2 h2.4 v2.4 h-2.4z M4,9.2 h10 v2.4 h-10z" fill="#afb1b3"/></svg>
<span class="t" style="left:203.00px;top:973.50px;line-height:20px;font-size:13.2px;color:#bbbbbb;transform:scaleX(0.9501);transform-origin:0 50%;">TODO</span>
<svg class="b" style="left:265.50px;top:975.00px;" width="13.00" height="13.00" viewBox="0 0 13 13"><circle cx="6.5" cy="6.5" r="6.5" fill="#c4c6c8"/><rect x="5.5" y="2.6" width="2" height="5" fill="#3c3f41"/><rect x="5.5" y="8.6" width="2" height="2" fill="#3c3f41"/></svg>
<span class="t" style="left:285.00px;top:973.50px;line-height:20px;font-size:13.2px;color:#bbbbbb;transform:scaleX(0.9775);transform-origin:0 50%;">Problems</span>
<svg class="b" style="left:367.00px;top:976.00px;" width="14.00" height="12.00" viewBox="0 0 14 12"><rect width="14" height="12" fill="#c4c6c8"/><path d="M2.4,2.6 L5.6,5.6 L2.4,8.6" fill="none" stroke="#2f3133" stroke-width="1.5"/><rect x="6.6" y="8" width="4.6" height="1.4" fill="#2f3133"/></svg>
<span class="t" style="left:388.00px;top:973.50px;line-height:20px;font-size:13.2px;color:#ffffff;letter-spacing:0.017px;">Terminal</span>
<svg class="b" style="left:466.00px;top:975.00px;" width="15.00" height="14.00" viewBox="0 0 15 14"><path d="M7.5,0 L15,3.6 L7.5,7.2 L0,3.6z" fill="#afb1b3"/><path d="M1.6,6.2 L0,7 L7.5,10.6 L15,7 L13.4,6.2 L7.5,9z" fill="#afb1b3"/><path d="M1.6,9.6 L0,10.4 L7.5,14 L15,10.4 L13.4,9.6 L7.5,12.4z" fill="#afb1b3"/></svg>
<span class="t" style="left:486.00px;top:973.50px;line-height:20px;font-size:13.2px;color:#bbbbbb;transform:scaleX(0.9442);transform-origin:0 50%;">Python Packages</span>
<svg class="b" style="left:613.00px;top:975.00px;" width="15.00" height="15.00" viewBox="0 0 15 15"><path d="M7.4,0 C4.6,0 4,1 4,2.4 V4.2 H7.6 V5 H2.2 C.8,5 0,6 0,7.6 C0,9.4 .8,10.4 2.2,10.4 H3.4 V8.6 C3.4,7.2 4.4,6.4 5.8,6.4 H9.2 C10.2,6.4 11,5.6 11,4.6 V2.4 C11,1 9.8,0 7.4,0z" fill="#afb1b3"/><path d="M7.6,15 C10.4,15 11,14 11,12.6 V10.8 H7.4 V10 H12.8 C14.2,10 15,9 15,7.4 C15,5.6 14.2,4.6 12.8,4.6 H11.6 V6.4 C11.6,7.8 10.6,8.6 9.2,8.6 H5.8 C4.8,8.6 4,9.4 4,10.4 V12.6 C4,14 5.2,15 7.6,15z" fill="#afb1b3"/></svg>
<span class="t" style="left:634.00px;top:973.50px;line-height:20px;font-size:13.2px;color:#bbbbbb;transform:scaleX(0.9550);transform-origin:0 50%;">Python Console</span>
<svg class="b" style="left:751.00px;top:974.50px;" width="16.00" height="16.00" viewBox="0 0 16 16"><path d="M4.2,.6 H11.8 L16,8 L11.8,15.4 H4.2 L0,8z" fill="#afb1b3"/><path d="M6,4.4 L11.6,8 L6,11.6z" fill="#3c3f41"/></svg>
<span class="t" style="left:773.00px;top:973.50px;line-height:20px;font-size:13.2px;color:#bbbbbb;transform:scaleX(0.9285);transform-origin:0 50%;">Services</span>
<svg class="b" style="left:8.00px;top:1000.50px;" width="15.00" height="15.00" viewBox="0 0 15 15"><rect x="3.6" y=".7" width="10.7" height="10.7" fill="none" stroke="#afb1b3" stroke-width="1.4"/><path d="M.7,3.6 V14.3 H11.4" fill="none" stroke="#afb1b3" stroke-width="1.4"/></svg>
<span class="t" style="left:34.00px;top:998.00px;line-height:20px;font-size:15px;color:#bbbbbb;transform:scaleX(0.9901);transform-origin:0 50%;">Python 3.11 (CVMS) has been configured as a project interpreter // Configure a Python interpreter... (2/11/2024 2:39 PM)</span>
<span class="t" style="left:1365.50px;top:998.00px;line-height:20px;font-size:15px;color:#bbbbbb;transform:scaleX(0.9535);transform-origin:0 50%;">209:26 (62 chars, 1 line break)</span>
<span class="t" style="left:1575.50px;top:998.00px;line-height:20px;font-size:15px;color:#bbbbbb;transform:scaleX(0.7914);transform-origin:0 50%;">CRLF</span>
<span class="t" style="left:1623.50px;top:998.00px;line-height:20px;font-size:15px;color:#bbbbbb;transform:scaleX(0.9059);transform-origin:0 50%;">UTF-8</span>
<span class="t" style="left:1676.00px;top:998.00px;line-height:20px;font-size:15px;color:#bbbbbb;transform:scaleX(0.9328);transform-origin:0 50%;">4 spaces</span>
<span class="t" style="left:1748.50px;top:998.00px;line-height:20px;font-size:15px;color:#bbbbbb;transform:scaleX(0.9381);transform-origin:0 50%;">Python 3.11 (CVMS)</span>
<svg class="b" style="left:1890.00px;top:1000.00px;" width="14.00" height="14.00" viewBox="0 0 14 14"><rect x="4" y="6" width="10" height="8" fill="#c4c6c8"/><path d="M1,6.5 V4 a2.6,2.6 0 0 1 5.2,0 V6.5" fill="none" stroke="#c4c6c8" stroke-width="1.6"/></svg>
<div class="b" style="left:1894.00px;top:72.00px;width:26.00px;height:894.00px;background:#3c3f41;"></div>
<div class="b" style="left:1894.00px;top:72.00px;width:1.00px;height:894.00px;background:#323232;"></div>
<svg class="b" style="left:1901.00px;top:86.60px;" width="15.50" height="16.00" viewBox="0 0 15.5 16"><path d="M7,.4 C3.8,.4 2.6,3.2 2.6,6 C2.6,9 1.6,10.2 .2,11.4 V12.3 H13.9 V11.4 C12.5,10.2 11.4,9 11.4,6 C11.4,3.2 10.2,.4 7,.4z" fill="#afb1b3"/><path d="M5,13.4 H9 C9,14.6 8.2,15.4 7,15.4 S5,14.6 5,13.4z" fill="#afb1b3"/><circle cx="12.1" cy="2.9" r="3.5" fill="#3c3f41"/><circle cx="12.1" cy="2.9" r="2.9" fill="#3b92d0"/></svg>
<span class="t" style="left:1869.50px;top:134.50px;width:71.00px;height:20px;line-height:20px;font-size:13.2px;color:#bbbbbb;letter-spacing:-0.075px;transform:rotate(90deg);transform-origin:center center;">Notifications</span>
<div class="b" style="left:16.90px;top:614.90px;width:1054.20px;height:200.10px;background:transparent;box-sizing:border-box;border:5.1px solid #8a0015;border-radius:13.5px;"></div>
</body></html>
